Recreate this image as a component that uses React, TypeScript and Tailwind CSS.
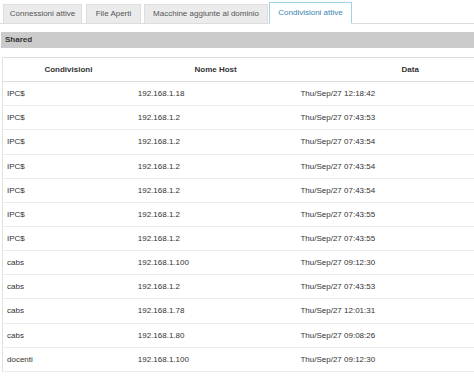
import React from "react";

const rows: [string, string, string, string][] = [
  ["IPC$", "192.168.1.18", "Thu/Sep/27 12:18:42", "h-[24px]"],
  ["IPC$", "192.168.1.2", "Thu/Sep/27 07:43:53", "h-[24px]"],
  ["IPC$", "192.168.1.2", "Thu/Sep/27 07:43:54", "h-[25px]"],
  ["IPC$", "192.168.1.2", "Thu/Sep/27 07:43:54", "h-[24px]"],
  ["IPC$", "192.168.1.2", "Thu/Sep/27 07:43:54", "h-[24px]"],
  ["IPC$", "192.168.1.2", "Thu/Sep/27 07:43:55", "h-[24px]"],
  ["IPC$", "192.168.1.2", "Thu/Sep/27 07:43:55", "h-[24px]"],
  ["cabs", "192.168.1.100", "Thu/Sep/27 09:12:30", "h-[24px]"],
  ["cabs", "192.168.1.2", "Thu/Sep/27 07:43:53", "h-[24px]"],
  ["cabs", "192.168.1.78", "Thu/Sep/27 12:01:31", "h-[25px]"],
  ["cabs", "192.168.1.80", "Thu/Sep/27 09:08:26", "h-[24px]"],
  ["docenti", "192.168.1.100", "Thu/Sep/27 09:12:30", "h-[24px]"],
];

export default function App() {
  return (
    <div
      className="w-[474px] h-[376px] overflow-hidden bg-white text-[8px] text-[#333]"
      style={{ fontFamily: '"Liberation Sans", Arial, sans-serif' }}
    >
      {/* Tabs */}
      <div className="relative h-[24px] flex items-end border-b border-[#dddddd]">
        <div className="ml-[3px] w-[79px] h-[20px] mb-[-1px] flex items-center justify-center bg-[#ebebeb] border border-[#dedede] border-b-[#dddddd] text-[#555]">
          Connessioni attive
        </div>
        <div className="ml-[4px] w-[55px] h-[20px] mb-[-1px] flex items-center justify-center bg-[#ebebeb] border border-[#dedede] border-b-[#dddddd] text-[#555]">
          File Aperti
        </div>
        <div className="ml-[3px] w-[124px] h-[20px] mb-[-1px] flex items-center justify-center bg-[#ebebeb] border border-[#dedede] border-b-[#dddddd] text-[#555]">
          Macchine aggiunte al dominio
        </div>
        <div className="ml-[1px] w-[83px] h-[22px] mb-[-1px] flex items-center justify-center bg-white border border-[#9fd3e8] border-b-white text-[#3a86b0]">
          Condivisioni attive
        </div>
      </div>

      {/* Shared bar */}
      <div className="mt-[8px] ml-[1px] h-[16px] bg-[#cbcbcb] flex items-center pl-[4px] font-bold text-[#333]">
        Shared
      </div>

      {/* Table */}
      <div className="mt-[9px] ml-[2px] w-[521px] border-l border-[#e2e2e2]">
        <div className="flex h-[25px] items-center border-t border-b border-[#dddddd] font-bold">
          <div className="w-[131px] px-[3px] text-center">Condivisioni</div>
          <div className="w-[164px] px-[3px] text-center">Nome Host</div>
          <div className="w-[226px] px-[3px] text-center">Data</div>
        </div>
        {rows.map((r, i) => (
          <div
            key={i}
            className={`flex ${r[3]} items-center border-b border-[#ececec]`}
          >
            <div className="w-[131px] pl-[4px] pr-[3px]">{r[0]}</div>
            <div className="w-[164px] pl-[4px] pr-[3px]">{r[1]}</div>
            <div className="w-[226px] pl-[3px] pr-[3px]">{r[2]}</div>
          </div>
        ))}
      </div>
    </div>
  );
}
